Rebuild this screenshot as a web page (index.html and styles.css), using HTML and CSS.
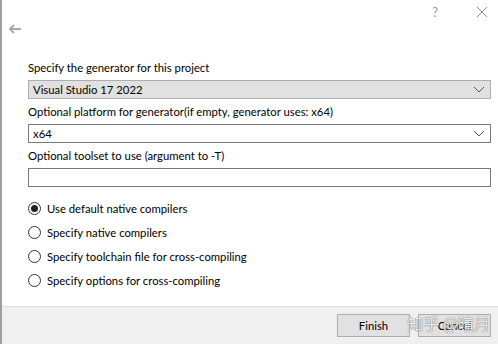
FILE: index.html
```html
<!DOCTYPE html>
<html lang="en">
<head>
  <meta charset="UTF-8">
  <title>CMake Setup</title>
  <link rel="stylesheet" href="styles.css">
</head>
<body>
  <div class="window">
    <div class="titlebar">
      <span class="help">?</span>
      <svg class="close" width="12" height="12" viewBox="0 0 12 12"><path d="M1 1 L11 11 M11 1 L1 11" stroke="#8a8a8a" stroke-width="1" fill="none"/></svg>
    </div>
    <div class="backrow">
      <svg width="14" height="10" viewBox="0 0 14 10"><path d="M13 5 H2 M6 1 L2 5 L6 9" stroke="#a8a8a8" stroke-width="2" fill="none"/></svg>
    </div>
    <div class="content">
      <label class="field-label">Specify the generator for this project</label>
      <div class="combo combo-ro">
        <span>Visual Studio 17 2022</span>
        <svg width="12" height="7" viewBox="0 0 12 7"><path d="M1 1 L6 6 L11 1" stroke="#555" stroke-width="1" fill="none"/></svg>
      </div>
      <label class="field-label">Optional platform for generator(if empty, generator uses: x64)</label>
      <div class="combo">
        <span>x64</span>
        <svg width="12" height="7" viewBox="0 0 12 7"><path d="M1 1 L6 6 L11 1" stroke="#555" stroke-width="1" fill="none"/></svg>
      </div>
      <label class="field-label">Optional toolset to use (argument to -T)</label>
      <div class="textbox"></div>
      <ul class="radios">
        <li><span class="radio checked"></span>Use default native compilers</li>
        <li><span class="radio"></span>Specify native compilers</li>
        <li><span class="radio"></span>Specify toolchain file for cross-compiling</li>
        <li><span class="radio"></span>Specify options for cross-compiling</li>
      </ul>
    </div>
    <div class="footer">
      <button class="btn">Finish</button>
      <button class="btn">Cancel</button>
      <span class="watermark">知乎 @晴月</span>
    </div>
  </div>
</body>
</html>
```

FILE: styles.css
```css
* { box-sizing: border-box; }
html, body {
  margin: 0;
  height: 100%;
}
body {
  font-family: Lato, "Noto Sans", sans-serif;
  font-size: 11.3px;
  color: #000;
  background: #fff;
}
.window {
  position: relative;
  height: 344px;
  width: 498px;
  border-left: 2px solid #a0a0a0;
  display: flex;
  flex-direction: column;
}
.titlebar {
  height: 24px;
  display: flex;
  justify-content: flex-end;
  align-items: center;
  padding-right: 10px;
  gap: 38px;
}
.titlebar .help {
  color: #9a9a9a;
  font-size: 13px;
  line-height: 1;
}
.backrow {
  height: 36px;
  padding-left: 6px;
  display: flex;
  align-items: flex-start;
}
.content {
  padding: 0 7px 0 26px;
  flex: 1;
}
.field-label {
  display: block;
  line-height: 16px;
  margin-bottom: 4px;
}
.combo,
.textbox {
  height: 19px;
  border: 1px solid #7a7a7a;
  background: #fff;
  display: flex;
  align-items: center;
  justify-content: space-between;
  padding: 0 5px 0 4px;
  margin-bottom: 5px;
}
.combo-ro {
  background: #e1e1e1;
  border-color: #adadad;
}
.combo span {
  line-height: 17px;
}
.radios {
  list-style: none;
  margin: 9px 0 0;
  padding: 0;
}
.radios li {
  height: 24px;
  display: flex;
  align-items: center;
}
.radio {
  width: 13px;
  height: 13px;
  border: 1px solid #333;
  border-radius: 50%;
  margin-right: 6px;
  display: flex;
  align-items: center;
  justify-content: center;
}
.radio.checked::after {
  content: "";
  width: 7px;
  height: 7px;
  border-radius: 50%;
  background: #222;
}
.footer {
  height: 38px;
  background: #f0f0f0;
  border-top: 1px solid #dfdfdf;
  display: flex;
  justify-content: flex-end;
  align-items: flex-start;
  padding: 7px 7px 0 0;
  gap: 8px;
}
.btn {
  width: 73px;
  height: 23px;
  border: 1px solid #adadad;
  background: #e1e1e1;
  font-family: Lato, "Noto Sans", sans-serif;
  font-size: 11.3px;
  color: #000;
  padding: 0;
}
.watermark {
  position: absolute;
  right: 8px;
  bottom: 9px;
  font-family: "Noto Sans CJK SC", sans-serif;
  font-size: 16px;
  color: rgba(255, 255, 255, 0.85);
  text-shadow: 0 0 1px #777, 0 0 1px #777;
  pointer-events: none;
}
```
